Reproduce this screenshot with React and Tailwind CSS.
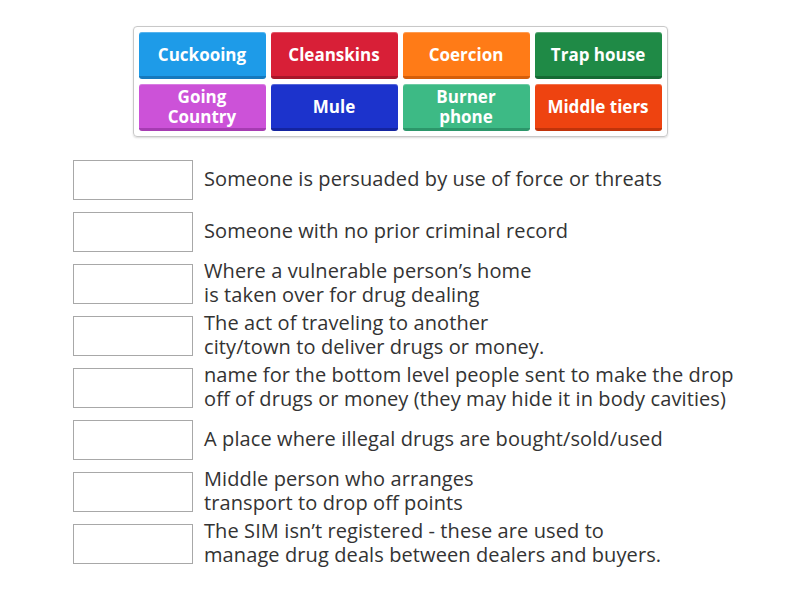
const tiles = [
  { label: 'Cuckooing', cls: 'bg-[#1e9be8] border-[#1679bd]' },
  { label: 'Cleanskins', cls: 'bg-[#d81f37] border-[#a8162a]' },
  { label: 'Coercion', cls: 'bg-[#ff7b17] border-[#d55f0a]' },
  { label: 'Trap house', cls: 'bg-[#1f8a46] border-[#156a34]' },
  { label: 'Going Country', cls: 'bg-[#cc52d8] border-[#a63cb2]' },
  { label: 'Mule', cls: 'bg-[#1c33cc] border-[#1424a0]' },
  { label: 'Burner phone', cls: 'bg-[#3dba85] border-[#2c966a]' },
  { label: 'Middle tiers', cls: 'bg-[#ee4310] border-[#c0330a]' },
];

const rows = [
  ['Someone is persuaded by use of force or threats'],
  ['Someone with no prior criminal record'],
  ['Where a vulnerable person’s home', 'is taken over for drug dealing'],
  ['The act of traveling to another', 'city/town to deliver drugs or money.'],
  ['name for the bottom level people sent to make the drop', 'off of drugs or money (they may hide it in body cavities)'],
  ['A place where illegal drugs are bought/sold/used'],
  ['Middle person who arranges', 'transport to drop off points'],
  ['The SIM isn’t registered - these are used to', 'manage drug deals between dealers and buyers.'],
];

export default function App() {
  return (
    <div className="w-[800px] h-[600px] bg-white font-['Open_Sans',sans-serif] overflow-hidden">
      <div className="pt-[26px] flex justify-center">
        <div className="grid grid-cols-4 gap-[5px] p-[5px] border border-[#c8c8c8] rounded-[4px] shadow-[0_1px_2px_rgba(0,0,0,0.15)]">
          {tiles.map((t) => (
            <div
              key={t.label}
              className={`w-[127px] h-[47px] pt-px rounded-[3px] border-b-[3px] flex items-center justify-center text-center text-white font-bold text-[17px] leading-[20px] px-2 shadow-[inset_0_1px_0_rgba(255,255,255,0.25)] ${t.cls}`}
            >
              {t.label}
            </div>
          ))}
        </div>
      </div>
      <div className="mt-[23px] pl-[73px] flex flex-col gap-[12px]">
        {rows.map((lines, i) => (
          <div key={i} className="flex items-center h-[40px]">
            <div className="w-[120px] h-[40px] border border-[#a8a8a8] bg-white shrink-0" />
            <div className="ml-[11px] -mt-[3px] text-[20px] tracking-[0.1px] leading-[24px] text-[#333] whitespace-nowrap">
              {lines.map((l, j) => (
                <div key={j}>{l}</div>
              ))}
            </div>
          </div>
        ))}
      </div>
    </div>
  );
}
